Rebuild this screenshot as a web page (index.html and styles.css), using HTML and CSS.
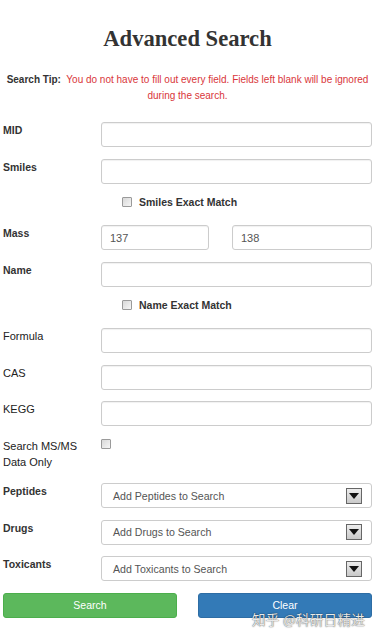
FILE: index.html
```html
<!DOCTYPE html>
<html>
<head>
<meta charset="utf-8">
<link rel="stylesheet" href="styles.css">
</head>
<body>
<div class="page">
  <h1 class="title">Advanced Search</h1>
  <p class="tip"><b>Search Tip:</b>&nbsp; <span class="tip-text">You do not have to fill out every field. Fields left blank will be ignored<br>during the search.</span></p>

  <form class="form">
    <div class="row">
      <label class="label">MID</label>
      <input class="field" type="text">
    </div>
    <div class="row">
      <label class="label">Smiles</label>
      <input class="field" type="text">
    </div>
    <div class="check-row">
      <span></span>
      <label class="check"><input class="cb" type="checkbox"><span>Smiles Exact Match</span></label>
    </div>
    <div class="row">
      <label class="label">Mass</label>
      <div class="pair">
        <input class="field" type="text" value="137">
        <input class="field" type="text" value="138">
      </div>
    </div>
    <div class="row">
      <label class="label">Name</label>
      <input class="field" type="text">
    </div>
    <div class="check-row">
      <span></span>
      <label class="check"><input class="cb" type="checkbox"><span>Name Exact Match</span></label>
    </div>
    <div class="row">
      <label class="label light">Formula</label>
      <input class="field" type="text">
    </div>
    <div class="row">
      <label class="label light">CAS</label>
      <input class="field" type="text">
    </div>
    <div class="row">
      <label class="label light">KEGG</label>
      <input class="field" type="text">
    </div>
    <div class="row ms-row">
      <label class="label light">Search MS/MS<br>Data Only</label>
      <div><input class="cb cb-ms" type="checkbox"></div>
    </div>
    <div class="row">
      <label class="label">Peptides</label>
      <div class="select"><span>Add Peptides to Search</span><span class="arrow"></span></div>
    </div>
    <div class="row">
      <label class="label">Drugs</label>
      <div class="select"><span>Add Drugs to Search</span><span class="arrow"></span></div>
    </div>
    <div class="row">
      <label class="label">Toxicants</label>
      <div class="select"><span>Add Toxicants to Search</span><span class="arrow"></span></div>
    </div>
    <div class="buttons">
      <button class="btn btn-search" type="button">Search</button>
      <button class="btn btn-clear" type="button">Clear</button>
    </div>
  </form>
  <div class="watermark">知乎&nbsp;@科研日精进</div>
</div>
</body>
</html>
```

FILE: styles.css
```css
html, body {
  margin: 0;
  padding: 0;
  background: #fff;
}
body {
  font-family: "Liberation Sans", Arial, sans-serif;
  color: #333;
  width: 373px;
  height: 639px;
  overflow: hidden;
}
.page {
  position: relative;
  padding: 0 1px 0 3px;
  height: 639px;
  box-sizing: border-box;
}
.title {
  margin: 0;
  padding-top: 26px;
  font-family: "Liberation Serif", "Times New Roman", serif;
  font-weight: bold;
  font-size: 22.6px;
  line-height: 26px;
  text-align: center;
  color: #333;
}
.tip {
  margin: 20px 0 0;
  font-size: 10px;
  line-height: 16px;
  text-align: center;
  color: #333;
}
.tip-text {
  color: #d9363a;
}
.form {
  margin-top: 18px;
}
.row {
  display: grid;
  grid-template-columns: 98px 1fr;
  margin-bottom: 11.5px;
}
.label {
  font-size: 10.5px;
  line-height: 16px;
  font-weight: bold;
  color: #333;
}
.label.light {
  font-weight: normal;
  color: #222;
  font-size: 11px;
}
.field {
  display: block;
  width: 100%;
  height: 25px;
  box-sizing: border-box;
  margin: 0;
  border: 1px solid #ccc;
  border-radius: 3px;
  padding: 0 8px;
  font-family: "Liberation Sans", Arial, sans-serif;
  font-size: 11px;
  color: #555;
  background: #fff;
  box-shadow: inset 0 1px 1px rgba(0,0,0,0.06);
  outline: none;
}
.pair {
  display: grid;
  grid-template-columns: 108px 1fr;
  column-gap: 23px;
}
.check-row {
  display: grid;
  grid-template-columns: 98px 1fr;
  height: 14px;
  margin-bottom: 16px;
}
.check {
  display: flex;
  align-items: center;
  gap: 7px;
  padding-left: 21px;
  font-size: 10.5px;
  font-weight: bold;
  color: #333;
}
.cb {
  appearance: none;
  -webkit-appearance: none;
  width: 10px;
  height: 10px;
  margin: 0;
  border: 1px solid #9a9a9a;
  border-radius: 1px;
  box-sizing: border-box;
  background: linear-gradient(135deg, #d8d8d8, #f6f6f6);
  flex: none;
}
.cb-ms {
  display: block;
  margin-top: 1px;
}
.ms-row {
  margin-top: 1.5px;
  margin-bottom: 13.5px;
}
.ms-row .label {
  height: 32px;
  line-height: 16px;
}
.select {
  height: 25px;
  box-sizing: border-box;
  border: 1px solid #ccc;
  border-radius: 3px;
  display: flex;
  align-items: center;
  justify-content: space-between;
  padding: 0 9px 0 11px;
  font-size: 10.6px;
  color: #555;
  background: #fff;
}
.arrow {
  position: relative;
  width: 16px;
  height: 16px;
  box-sizing: border-box;
  border: 1px solid #666;
  background: linear-gradient(#ececec, #c9c9c9);
}
.arrow::after {
  content: "";
  position: absolute;
  left: 2px;
  top: 4px;
  border-left: 5px solid transparent;
  border-right: 5px solid transparent;
  border-top: 6px solid #111;
}
.buttons {
  display: grid;
  grid-template-columns: 1fr 1fr;
  column-gap: 21px;
  margin-top: 3px;
}
.btn {
  height: 25px;
  border: 1px solid transparent;
  border-radius: 3px;
  font-family: "Liberation Sans", Arial, sans-serif;
  font-size: 10.5px;
  line-height: 14px;
  padding: 0 0 1px;
  color: #fff;
  margin: 0;
}
.btn-search {
  background: #5cb85c;
  border-color: #4cae4c;
}
.btn-clear {
  background: #337ab7;
  border-color: #2e6da4;
}
.watermark {
  position: absolute;
  left: 252px;
  top: 611px;
  font-family: "Noto Sans CJK SC", "Liberation Sans", sans-serif;
  font-size: 13.5px;
  line-height: 16px;
  color: #e9e9e9;
  text-shadow: 0 0 1px rgba(0,0,0,0.7), 0 0 2px rgba(0,0,0,0.3);
  letter-spacing: 0.3px;
}
```
